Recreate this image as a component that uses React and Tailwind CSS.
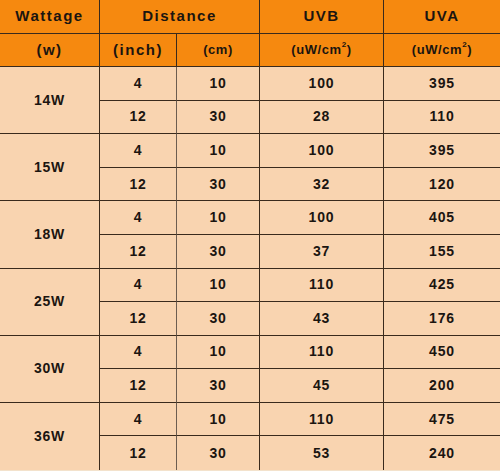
import React from 'react';

const ROWS = [
  { w: '14W', uvb: ['100', '28'], uva: ['395', '110'] },
  { w: '15W', uvb: ['100', '32'], uva: ['395', '120'] },
  { w: '18W', uvb: ['100', '37'], uva: ['405', '155'] },
  { w: '25W', uvb: ['110', '43'], uva: ['425', '176'] },
  { w: '30W', uvb: ['110', '45'], uva: ['450', '200'] },
  { w: '36W', uvb: ['110', '53'], uva: ['475', '240'] },
];

const head = 'bg-[#f6890f] flex items-center justify-center border-[#3a2a1c]';
const body = 'bg-[#f9d4b0] flex items-center justify-center border-[#3a2a1c] text-[14px] tracking-[0.8px]';

export default function App() {
  return (
    <div
      className="w-[500px] h-[471px] grid grid-cols-[100px_77px_83px_124px_116px] grid-rows-[repeat(14,1fr)] font-bold text-[#1b1510] border-r border-b border-[#f3e2cc]"
      style={{ fontFamily: '"Liberation Sans", Arial, sans-serif' }}
    >
      <div className={`${head} border-r border-b text-[15px] tracking-[1.5px]`}>Wattage</div>
      <div className={`${head} col-span-2 border-r border-b text-[15px] tracking-[1.5px]`}>Distance</div>
      <div className={`${head} border-r border-b text-[15px] tracking-[1.5px]`}>UVB</div>
      <div className={`${head} border-b text-[15px] tracking-[1.5px]`}>UVA</div>

      <div className={`${head} border-r border-b text-[15px] tracking-[1.5px]`}>(w)</div>
      <div className={`${head} border-r border-b text-[15px] tracking-[1.5px]`}>(inch)</div>
      <div className={`${head} border-r border-b text-[13px] tracking-[0.5px]`}>(cm)</div>
      <div className={`${head} border-r border-b text-[13px] tracking-[0.6px]`}>
        (uW/cm<sup className="text-[8px] -top-[0.6em]">2</sup>)
      </div>
      <div className={`${head} border-b text-[13px] tracking-[0.6px]`}>
        (uW/cm<sup className="text-[8px] -top-[0.6em]">2</sup>)
      </div>

      {ROWS.map((r, i) => (
        <React.Fragment key={r.w}>
          <div className={`${body} row-span-2 border-r ${i < ROWS.length - 1 ? 'border-b' : ''}`}>{r.w}</div>
          {[0, 1].map(j => {
            const last = i === ROWS.length - 1 && j === 1;
            const b = last ? '' : 'border-b';
            return (
              <React.Fragment key={j}>
                <div className={`${body} border-r border-r-[#6d5d50] ${b}`}>{j === 0 ? '4' : '12'}</div>
                <div className={`${body} border-r ${b}`}>{j === 0 ? '10' : '30'}</div>
                <div className={`${body} border-r ${b}`}>{r.uvb[j]}</div>
                <div className={`${body} ${b}`}>{r.uva[j]}</div>
              </React.Fragment>
            );
          })}
        </React.Fragment>
      ))}
    </div>
  );
}
